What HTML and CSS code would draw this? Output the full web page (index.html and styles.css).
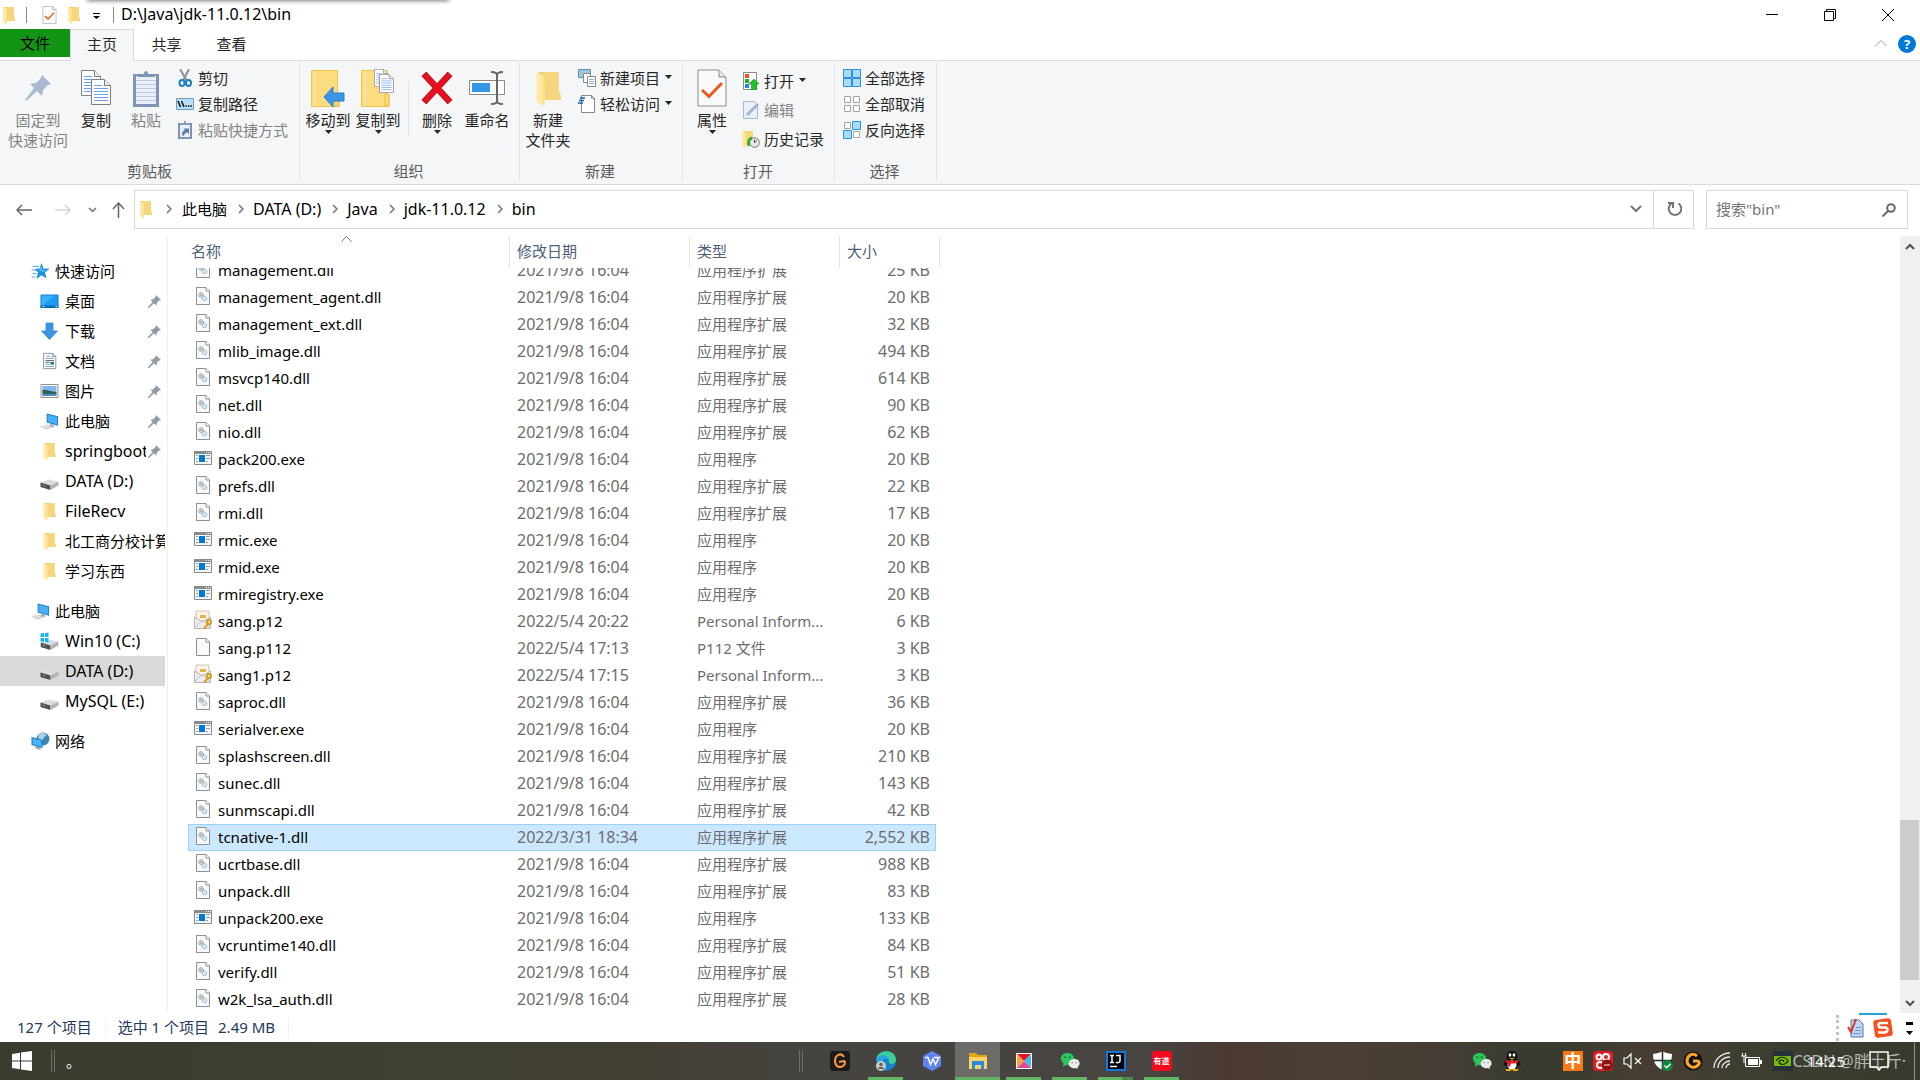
FILE: index.html
```html
<!DOCTYPE html>
<html lang="zh-CN">
<head>
    <meta charset="UTF-8">
    <meta name="viewport" content="width=device-width, initial-scale=1.0">
    <title>bin</title>
    <link rel="stylesheet" href="styles.css">
</head>
<body>
    <!-- shared icons -->
    <svg class="sprite" aria-hidden="true">
        <symbol id="folder" viewBox="0 0 12 18">
            <path d="M1 1h10v10l1 1v3H5z" fill="#f0cd6c"/>
            <path d="M4 1h7v11l1 1v2H4z" fill="#f6d67c"/>
            <path d="M0 1l4 2v15l-4-2z" fill="#ffe9a6"/>
            <path d="M3 2l1 1v15l-1-.5z" fill="#ffe08a"/>
        </symbol>
        <symbol id="dll" viewBox="0 0 18 20">
            <path d="M2.500 1.500h9.500l3.500 3.500v13.500H2.500z" fill="#f9f9f9" stroke="#8c8f91"/>
            <path d="M12 1.500v3.500h3.500" fill="#fff" stroke="#8c8f91"/>
            <circle cx="7" cy="9" r="2.300" fill="#dde1e4" stroke="#7d858b" stroke-dasharray="1 .5"/>
            <circle cx="7" cy="9" r=".8" fill="#7d858b"/>
            <circle cx="10.500" cy="12.500" r="2.200" fill="#d5eaf5" stroke="#77a3bd" stroke-dasharray="1 .5"/>
        </symbol>
        <symbol id="exe" viewBox="0 0 18 20">
            <path d="M.5 3.500h17v13H.5z" fill="#f7f7f7" stroke="#858a8e"/>
            <path d="M0 3h18v3H0z" fill="#858a8e"/>
            <path d="M12 4h1v1h-1zM14 4h1v1h-1zM16 4h1v1h-1z" fill="#fff"/>
            <path d="M5 7h6v7H5z" fill="#0078d7"/>
            <path d="M2 7.500h2M2 10.500h2M2 13.500h2M12 7.500h4M12 10.500h4M12 13.500h2" stroke="#9a9a9a"/>
        </symbol>
        <symbol id="p12" viewBox="0 0 18 20">
            <path d="M2 1h13v10H2z" fill="#faf5e6" stroke="#cfc6ab"/>
            <path d="M6 5h6v3H6z" fill="#e2b64c"/>
            <path d="M.5 7l8 5 8-5v11.500H.5z" fill="#ececec" stroke="#b5b5b5"/>
            <path d="M.5 18l6-6M16.500 18l-6-6" stroke="#c4c4c4"/>
            <circle cx="15" cy="12" r="2.200" fill="#fbd67a" stroke="#d08c17" stroke-width="1.500"/>
            <path d="M14 14l-4 4.500" stroke="#e0992a" stroke-width="2"/>
        </symbol>
        <symbol id="blank" viewBox="0 0 18 20">
            <path d="M2.500 1.500h9.500l3.500 3.500v13.500H2.500z" fill="#fafafa" stroke="#8c8f91"/>
            <path d="M12 1.500v3.500h3.500" fill="#fff" stroke="#8c8f91"/>
        </symbol>
        <symbol id="star" viewBox="0 0 18 18">
            <path d="M10 1l2 5.500 6 .3-4.500 3.700 1.500 6-5-3.200L5 17l1.500-6.500L3 7l5-.5z" fill="#1e90e0"/>
            <path d="M10 4l1.200 3.800 4 .2-3 2.200-5-2z" fill="#58b7f5"/>
            <path d="M1 4.500h6M0 8h5M1 11.500h4M0 15h4" stroke="#54aeea"/>
        </symbol>
        <symbol id="desktop" viewBox="0 0 18 18">
            <path d="M.5 3h17v12.500H.5z" fill="#1d9bf2" stroke="#0f78c8"/>
            <path d="M1 3.500h13L3 13H1z" fill="#3db0fa"/>
            <path d="M0 13.500h18V16H0z" fill="#0a6ab8"/>
            <path d="M2 14.500h2M15 14.500h2" stroke="#cfeaff"/>
        </symbol>
        <symbol id="download" viewBox="0 0 18 18">
            <path d="M5.500 1h7v8H17l-8 8.500L1 9h4.500z" fill="#3c95e2" stroke="#2b7fca" stroke-width=".7"/>
        </symbol>
        <symbol id="doc" viewBox="0 0 18 20">
            <path d="M2.500 1.500h10l3.500 3.500v13.500H2.500z" fill="#fff" stroke="#8a8a8a"/>
            <path d="M12.500 1.500v3.500H16" fill="none" stroke="#8a8a8a"/>
            <path d="M5 4.500h5M4.500 7h9.500M4.500 13.500H9M4.500 16H14" stroke="#63a6c9"/>
            <path d="M4.500 9.500h9.500M4.500 11.500H9" stroke="#555"/>
            <path d="M10 11h4v3h-4z" fill="#2f6d99"/>
        </symbol>
        <symbol id="picture" viewBox="0 0 18 18">
            <path d="M.5 2.500h17v13H.5z" fill="#fff" stroke="#8f9396"/>
            <path d="M2 4h14v10H2z" fill="#7db8ea"/>
            <path d="M2 8c3-1 8 2 14 2v2H2z" fill="#2f6355"/>
            <path d="M2 12h14v2H2z" fill="#4d8fc4"/>
        </symbol>
        <symbol id="pc" viewBox="0 0 20 18">
            <path d="M7 1l12 3v10L7 10.500z" fill="#1f7fc4"/>
            <path d="M8 2.300l10 2.500v7.800L8 9.800z" fill="#46b1f5"/>
            <path d="M11 12l4 1.500-1 2-4-1z" fill="#9aa7b1"/>
            <path d="M0 14.500l8-2 6 3-8 2.500z" fill="#c8ced3"/>
            <path d="M2 14.800l6-1.300M4 16l6-1.300" stroke="#fff" stroke-width=".6"/>
        </symbol>
        <symbol id="drive" viewBox="0 0 18 18">
            <path d="M0 10.500l8-3 10 2-8 4z" fill="#dcdcdc"/>
            <path d="M0 10.500l10 3v4.500l-10-3z" fill="#4e4e4e"/>
            <path d="M10 13.500l8-4v4l-8 4.500z" fill="#b3b3b3"/>
            <path d="M2 13l3 1" stroke="#8f9c8c"/>
        </symbol>
        <symbol id="windrive" viewBox="0 0 18 18">
            <use href="#drive"/>
            <path d="M0 1h8v9H0z" fill="#fff"/>
            <path d="M0 1.500l3.500-.5v4H0zM4.500 1L8 .5V5H4.500zM0 6h3.500v4L0 9.500zM4.500 6H8v4.500L4.500 10z" fill="#13b6ee"/>
        </symbol>
        <symbol id="network" viewBox="0 0 18 18">
            <circle cx="11.500" cy="7" r="6.500" fill="#3c87b5"/>
            <path d="M7 3c3-3 7-2 8 0l-3 3-2 4-3-3z" fill="#a5d3ea"/>
            <path d="M0 5l11 3v8L0 13z" fill="#1873b8"/>
            <path d="M1 6.300l9 2.500v6L1 12.200z" fill="#4ab6f7"/>
            <path d="M4 15l5 2" stroke="#93a6b4" stroke-width="2"/>
        </symbol>
        <symbol id="pin" viewBox="0 0 14 14">
            <path d="M8.500 0L14 5.500l-2 .3-2.500 2.500-.3 3.200-2.700-2.700L1 14H0v-1l5-5.500L2.500 5l3-.5L8.200 2z" fill="#8e9aa5"/>
        </symbol>
        <symbol id="check" viewBox="0 0 30 38">
            <path d="M1 1h21l7 7v29H1z" fill="#fafafa" stroke="#8a8a8a"/>
            <path d="M22 1v7h7" fill="#e6e6e6" stroke="#8a8a8a"/>
            <path d="M5 21l7 6.500L25 14" fill="none" stroke="#e8591b" stroke-width="3"/>
        </symbol>
        <symbol id="page" viewBox="0 0 20 26">
            <path d="M.5.5h13l6 6v19H.5z" fill="#fff" stroke="#7f7f7f"/>
            <path d="M13.500.5v6h6" fill="#eee" stroke="#7f7f7f"/>
            <path d="M3 6.500h8M3 9.500h14M3 12.500h14M3 15.500h14M3 18.500h14M3 21.500h14" stroke="#6f9ff0"/>
        </symbol>
        <symbol id="bigfolder" viewBox="0 0 29 37">
            <path d="M.5.5h26V26l1.500 2v8.500H.5z" fill="#fcdc80" stroke="#efc54a"/>
            <path d="M4 1v35" stroke="#fbe7ab" stroke-width="1.500"/>
            <path d="M24 36V25c0-2 4-2 4 0v11z" fill="#fbd873" stroke="#e8bb42"/>
        </symbol>
        <symbol id="down" viewBox="0 0 7 4">
            <path d="M0 0h7L3.500 4z" fill="currentColor"/>
        </symbol>
        <symbol id="chevron" viewBox="0 0 6 10">
            <path d="M1 1l4 4-4 4" fill="none" stroke="#737373" stroke-width="1.500"/>
        </symbol>
        <symbol id="wechat" viewBox="0 0 20 18">
            <path d="M3 15l.5-3.500C-2 6 2 1 7.500 1c5 0 8 4 6.500 8s-5 5-8 4z" fill="#2dc35f"/>
            <path d="M18 17l-.5-2c4-3 2-8-3-8s-8 5-4 8c2 1.500 4 1.500 5.500 1z" fill="#ececec"/>
            <path d="M4.500 4.500h1.500v1.500H4.500zM9 4.500h1.500v1.500H9z" fill="#14602c"/>
            <path d="M11.500 10h1.200v1.200h-1.200zM15.500 10h1.200v1.200h-1.200z" fill="#777"/>
        </symbol>
    </svg>

    <div class="window">
        <header class="titlebar">
            <div class="back-shadow"></div>
            <svg class="ti-folder"><use href="#folder"/></svg>
            <span class="bar"></span>
            <button class="qa" aria-label="属性"><svg class="ti-check"><use href="#check"/></svg></button>
            <button class="qa" aria-label="新建文件夹"><svg class="ti-folder"><use href="#folder"/></svg></button>
            <button class="qa qa-more" aria-label="自定义快速访问工具栏"><svg width="7" height="6"><path d="M0 0h7v1H0zM0 3h7L3.500 6z"/></svg></button>
            <span class="bar bar-title"></span>
            <span class="title">D:\Java\jdk-11.0.12\bin</span>
            <div class="win-buttons">
                <button aria-label="最小化"><svg width="12" height="12"><path d="M0 5.500h12" stroke="#000"/></svg></button>
                <button aria-label="还原"><svg width="12" height="12" fill="none" stroke="#000"><path d="M.5 2.500h9v9h-9z"/><path d="M2.500 2.500v-2h9v9h-2"/></svg></button>
                <button aria-label="关闭"><svg width="12" height="12"><path d="M0 0l12 12M12 0L0 12" stroke="#000"/></svg></button>
            </div>
        </header>

        <nav class="tabs">
            <button class="tab tab-file">文件</button>
            <button class="tab active">主页</button>
            <button class="tab">共享</button>
            <button class="tab">查看</button>
            <div class="tabs-right">
                <button aria-label="最小化功能区"><svg width="12" height="7"><path d="M0 6.500l6-6 6 6" fill="none" stroke="#9a9a9a"/></svg></button>
                <button class="help" aria-label="帮助">?</button>
            </div>
        </nav>

        <section class="ribbon">
            <div class="group g-clip">
                <div class="tools">
                    <button class="big disabled w-66">
                        <span class="pic"><svg width="26" height="26" viewBox="0 0 26 26"><path d="M17 0l9 9-3 1-5 5-1 6-5-5L1 26l-1-1 9-12-4-4 6-1 5-5z" fill="#a9b9cf"/></svg></span>
                        固定到<br>快速访问
                    </button>
                    <button class="big w-46">
                        <span class="pic"><svg width="30" height="36"><use href="#page" width="20" height="26"/><use href="#page" x="10" y="9" width="20" height="26"/></svg></span>
                        复制
                    </button>
                    <button class="big disabled w-50">
                        <span class="pic"><svg width="26" height="37"><path d="M0 4h26v33H0z" fill="#7f93b7"/><path d="M3 6h20v28H3z" fill="#eaf1fb"/><path d="M3 10.500h20M3 14.500h20M3 18.500h20M3 22.500h20M3 26.500h20M3 30.500h20" stroke="#bccbe2"/><path d="M4 7l3-3h4c0-4 4-4 4 0h4l3 3z" fill="#7f93b7"/></svg></span>
                        粘贴
                    </button>
                    <div class="small-list">
                        <button class="small"><svg width="18" height="18"><path d="M4 0l7 12M13 0L7 12" stroke="#8a9299" stroke-width="2"/><ellipse cx="6" cy="14" rx="2.500" ry="3" fill="none" stroke="#1b7fc2" stroke-width="2"/><ellipse cx="12.500" cy="14" rx="2.500" ry="3" fill="none" stroke="#1b7fc2" stroke-width="2"/></svg>剪切</button>
                        <button class="small"><svg width="18" height="18"><path d="M.5 3.500h17v11H.5z" fill="#b9e0fa" stroke="#6f9ec0"/><path d="M2 6l2.500 6M5.500 6L8 12" stroke="#111" stroke-width="1.500"/><path d="M9.500 11h1.500M12 11h1.500M14.500 11H16" stroke="#111" stroke-width="1.500"/></svg>复制路径</button>
                        <button class="small disabled"><svg width="18" height="18"><path d="M2 2h14v16H2z" fill="#7f93b7"/><path d="M4 4h10v12H4z" fill="#e8effa"/><path d="M5 4V2h3V0h2v2h3v2z" fill="#8b9dbd"/><path d="M6 14c0-3 1-4 3-5L7.500 7.500H13V13l-1.500-1.500C9 12 8 13 8 15z" fill="#5f7aa8"/></svg>粘贴快捷方式</button>
                    </div>
                </div>
                <div class="group-name">剪贴板</div>
            </div>

            <div class="group g-org">
                <div class="tools">
                    <button class="big w-50">
                        <span class="pic"><svg width="34" height="38"><use href="#bigfolder" y="1" width="29" height="37"/><path d="M13 28l9-10v6h11v8H22v6z" fill="#3a97e8" stroke="#2b7fca"/></svg></span>
                        移动到
                        <svg class="arrow"><use href="#down"/></svg>
                    </button>
                    <button class="big w-50">
                        <span class="pic"><svg width="34" height="38"><use href="#bigfolder" y="1" width="29" height="37"/><use href="#page" x="13" width="14" height="18"/><use href="#page" x="18" y="5" width="15" height="19"/></svg></span>
                        复制到
                        <svg class="arrow"><use href="#down"/></svg>
                    </button>
                    <span class="tool-sep"></span>
                    <button class="big w-50">
                        <span class="pic"><svg width="32" height="34"><path d="M3 3l26 28M29 3L3 31" stroke="#a8121a" stroke-width="6.500"/><path d="M3 3l26 28M29 3L3 31" stroke="#e8101c" stroke-width="5"/></svg></span>
                        删除
                        <svg class="arrow"><use href="#down"/></svg>
                    </button>
                    <button class="big w-50">
                        <span class="pic"><svg width="36" height="34"><path d="M.5 9.500h35v14H.5z" fill="#fff" stroke="#8a8a8a"/><path d="M3 12h18v9H3z" fill="#3295e8"/><path d="M22 1c4 0 6 1 6 3v26c0 2-2 3-6 3M34 1c-4 0-6 1-6 3v26c0 2 2 3 6 3" fill="none" stroke="#666" stroke-width="2"/></svg></span>
                        重命名
                    </button>
                </div>
                <div class="group-name">组织</div>
            </div>

            <div class="group g-new">
                <div class="tools">
                    <button class="big w-50">
                        <span class="pic"><svg width="25" height="36"><use href="#folder" width="25" height="36"/></svg></span>
                        新建<br>文件夹
                    </button>
                    <div class="small-list">
                        <button class="small"><svg width="18" height="18"><path d="M.5.500h12v8H.5z" fill="#9cc7de" stroke="#5a91ad"/><path d="M5.500 4.500h7v9h-7z" fill="#fff" stroke="#8a8a8a"/><path d="M9.500 7.500h8v10h-8z" fill="#fff" stroke="#8a8a8a"/><path d="M11 10.500h5M11 12.500h5M11 14.500h5" stroke="#8db4ee"/></svg>新建项目<svg class="arrow"><use href="#down"/></svg></button>
                        <button class="small"><svg width="18" height="18"><path d="M3.500.500h10l3 3v14h-13z" fill="#fff" stroke="#8a8a8a"/><path d="M13.500.5v3h3" fill="none" stroke="#8a8a8a"/><path d="M2 3h5M1 5.500h5M0 8h5" stroke="#1560a8" stroke-width="1.500"/></svg>轻松访问<svg class="arrow"><use href="#down"/></svg></button>
                    </div>
                </div>
                <div class="group-name">新建</div>
            </div>

            <div class="group g-open">
                <div class="tools">
                    <button class="big w-50">
                        <span class="pic"><svg width="30" height="38"><use href="#check"/></svg></span>
                        属性
                        <svg class="arrow"><use href="#down"/></svg>
                    </button>
                    <div class="small-list loose">
                        <button class="small"><svg width="18" height="18"><path d="M1.500.5h13v17h-13z" fill="#fff" stroke="#8a8a8a"/><path d="M3 2h4v4H3z" fill="#e8591b"/><path d="M3 7h4v4H3z" fill="#1fae2a"/><path d="M3 12h4v4H3z" fill="#2a86dc"/><path d="M12 7l5 5h-2.500v6h-5v-6H7z" fill="#22c02a" stroke="#158a1c" stroke-width=".6"/></svg>打开<svg class="arrow"><use href="#down"/></svg></button>
                        <button class="small disabled"><svg width="18" height="18"><path d="M1.500.5h11l3 3v14h-14z" fill="#e9f0fa" stroke="#a9b9d2"/><path d="M5 14L16 3" stroke="#a3b5d2" stroke-width="3"/></svg>编辑</button>
                        <button class="small"><svg width="18" height="18"><use href="#folder" width="12" height="18"/><circle cx="12.500" cy="12.500" r="4.800" fill="#e8e8e8" stroke="#777"/><path d="M12.500 9.500v3l2-1.500" fill="none" stroke="#444"/><path d="M10 8c-4 1-4 5-3 8" fill="none" stroke="#23b02c" stroke-width="2.500"/></svg>历史记录</button>
                    </div>
                </div>
                <div class="group-name">打开</div>
            </div>

            <div class="group g-select">
                <div class="tools">
                    <div class="small-list">
                        <button class="small"><svg width="18" height="18" fill="#a9dbfb" stroke="#2b8fdf"><path d="M.5.500h8v8h-8zM9.500.500h8v8h-8zM.5 9.500h8v8h-8zM9.500 9.500h8v8h-8z"/></svg>全部选择</button>
                        <button class="small"><svg width="18" height="18" fill="#fff" stroke="#a3a3a3"><path d="M1.500 1.500h6v6h-6zM10.500 1.500h6v6h-6zM1.500 10.500h6v6h-6zM10.500 10.500h6v6h-6z"/></svg>全部取消</button>
                        <button class="small"><svg width="18" height="18"><path d="M1.500 1.500h6v6h-6zM10.500 10.500h6v6h-6z" fill="#fff" stroke="#a3a3a3"/><path d="M9.500.500h8v8h-8zM.5 9.500h8v8h-8z" fill="#a9dbfb" stroke="#2b8fdf"/></svg>反向选择</button>
                    </div>
                </div>
                <div class="group-name">选择</div>
            </div>
        </section>

        <div class="navbar">
            <div class="nav-buttons">
                <button aria-label="后退"><svg width="16" height="12" fill="none" stroke="#666" stroke-width="1.500"><path d="M1 6h15M6 1L1 6l5 5"/></svg></button>
                <button aria-label="前进"><svg width="16" height="12" fill="none" stroke="#d5d5d5" stroke-width="1.500"><path d="M0 6h15M10 1l5 5-5 5"/></svg></button>
                <button aria-label="最近浏览的位置" class="recent"><svg width="9" height="6" fill="none" stroke="#737373" stroke-width="1.500"><path d="M1 1l3.500 3.500L8 1"/></svg></button>
                <button aria-label="上移" class="up"><svg width="13" height="16" fill="none" stroke="#666" stroke-width="1.500"><path d="M6.500 1v15M1 7l5.500-6L12 7"/></svg></button>
            </div>
            <div class="address">
                <svg class="ti-folder"><use href="#folder"/></svg>
                <svg class="crumb-sep"><use href="#chevron"/></svg>
                <a href="#">此电脑</a>
                <svg class="crumb-sep"><use href="#chevron"/></svg>
                <a href="#" class="latin">DATA (D:)</a>
                <svg class="crumb-sep"><use href="#chevron"/></svg>
                <a href="#" class="latin">Java</a>
                <svg class="crumb-sep"><use href="#chevron"/></svg>
                <a href="#" class="latin">jdk-11.0.12</a>
                <svg class="crumb-sep"><use href="#chevron"/></svg>
                <a href="#" class="latin">bin</a>
                <button class="history" aria-label="以前的位置"><svg width="12" height="8" fill="none" stroke="#737373" stroke-width="2"><path d="M1 1l5 5 5-5"/></svg></button>
                <button class="refresh" aria-label="刷新"><svg width="16" height="16" fill="none" stroke="#737373" stroke-width="2"><path d="M12.500 2.500A6.300 6.300 0 1 1 5.500 2.500"/><path d="M2 2h5v5"/></svg></button>
            </div>
            <div class="search">
                <input type="text" placeholder='搜索"bin"' aria-label="搜索">
                <svg width="14" height="14" fill="none" stroke="#6b6b6b" stroke-width="2"><circle cx="9" cy="5" r="3.800"/><path d="M6 8l-5.500 5.500"/></svg>
            </div>
        </div>

        <main class="content">
            <aside class="sidebar">
                <a href="#" class="side-item root"><svg><use href="#star"/></svg>快速访问</a>
                <a href="#" class="side-item"><svg><use href="#desktop"/></svg><span>桌面</span><svg class="pin"><use href="#pin"/></svg></a>
                <a href="#" class="side-item"><svg><use href="#download"/></svg><span>下载</span><svg class="pin"><use href="#pin"/></svg></a>
                <a href="#" class="side-item"><svg><use href="#doc"/></svg><span>文档</span><svg class="pin"><use href="#pin"/></svg></a>
                <a href="#" class="side-item"><svg><use href="#picture"/></svg><span>图片</span><svg class="pin"><use href="#pin"/></svg></a>
                <a href="#" class="side-item"><svg><use href="#pc"/></svg><span>此电脑</span><svg class="pin"><use href="#pin"/></svg></a>
                <a href="#" class="side-item"><svg><use href="#folder"/></svg><span class="latin">springboot</span><svg class="pin"><use href="#pin"/></svg></a>
                <a href="#" class="side-item"><svg><use href="#drive"/></svg><span class="latin">DATA (D:)</span></a>
                <a href="#" class="side-item"><svg><use href="#folder"/></svg><span class="latin">FileRecv</span></a>
                <a href="#" class="side-item"><svg><use href="#folder"/></svg><span>北工商分校计算</span></a>
                <a href="#" class="side-item"><svg><use href="#folder"/></svg><span>学习东西</span></a>
                <a href="#" class="side-item root spaced"><svg><use href="#pc"/></svg>此电脑</a>
                <a href="#" class="side-item"><svg><use href="#windrive"/></svg><span class="latin">Win10 (C:)</span></a>
                <a href="#" class="side-item current"><svg><use href="#drive"/></svg><span class="latin">DATA (D:)</span></a>
                <a href="#" class="side-item"><svg><use href="#drive"/></svg><span class="latin">MySQL (E:)</span></a>
                <a href="#" class="side-item root spaced"><svg><use href="#network"/></svg>网络</a>
            </aside>

            <div class="files" id="files">
                <table>
                    <thead>
                        <tr>
                            <th class="col-name">名称<svg class="sort" width="11" height="6"><path d="M.5 5.500l5-5 5 5" fill="none" stroke="#777"/></svg></th>
                            <th class="col-date">修改日期</th>
                            <th class="col-type">类型</th>
                            <th class="col-size">大小</th>
                        </tr>
                    </thead>
                    <tbody id="rows"></tbody>
                </table>
            </div>

            <div class="scrollbar">
                <button aria-label="向上滚动"><svg width="10" height="7" fill="none" stroke="#505050" stroke-width="2"><path d="M1 6l4-4 4 4"/></svg></button>
                <div class="thumb"></div>
                <button aria-label="向下滚动"><svg width="10" height="7" fill="none" stroke="#505050" stroke-width="2"><path d="M1 1l4 4 4-4"/></svg></button>
            </div>
        </main>

        <footer class="status">
            <span class="count">127 个项目</span>
            <span class="picked">选中 1 个项目</span>
            <span class="total">2.49 MB</span>
            <div class="ime">
                <span class="grip"></span>
                <svg width="18" height="20"><path d="M4 2h8l4 4v13H4z" fill="#bcd8f5" stroke="#5577a5"/><path d="M9 9.500h5M8 12.500h6M6 15.500h8" stroke="#6b98d0"/><path d="M1 9l3 5L9 1" fill="none" stroke="#e0341d" stroke-width="2"/></svg>
                <svg width="20" height="20"><rect x="1" y="1" width="18" height="18" rx="3" fill="#f4511e" transform="rotate(-8 10 10)"/><path d="M15 5H8c-4 0-3 4.500 0 4.500h4c4 0 3 5-1 5H5" fill="none" stroke="#fff" stroke-width="2.500"/></svg>
                <svg width="7" height="14"><path d="M0 1h7v3H0zM0 10h7l-3.500 4z"/></svg>
            </div>
        </footer>
    </div>

    <footer class="taskbar">
        <button class="start" aria-label="开始"><svg width="20" height="20"><path d="M0 3l8-1.200V9.500H0zM9 1.600L20 0v9.500H9zM0 10.500h8v7.700L0 17zM9 10.500h11V20L9 18.400z" fill="#fff"/></svg></button>
        <span class="bars"></span>
        <span class="dot">。</span>
        <div class="apps">
            <span class="bars"></span>
            <button class="app" aria-label="G"><svg width="20" height="20"><rect width="20" height="20" rx="3" fill="#1b1b1b"/><path d="M14 6c-3-5-9-2-9 4s5 7 8 5 2-5 1-5L9 11" fill="none" stroke="#ff9a3d" stroke-width="2"/></svg></button>
            <button class="app open" aria-label="Edge"><svg width="20" height="20"><circle cx="10" cy="10" r="10" fill="#1583cf"/><path d="M0 9C2-3 20-2 20 9c0 4-5 5-7 3 1-6-8-9-13-3z" fill="#3ccf9a"/><path d="M1 7C5 2 12 4 13 9c-4-3-8 0-7 6-4-1-6-5-5-8z" fill="#2ba5e0"/><circle cx="5" cy="15" r="5" fill="#c9c9c9"/><circle cx="5" cy="13.500" r="1.800" fill="#666"/><path d="M2 18c0-3 6-3 6 0z" fill="#666"/></svg></button>
            <button class="app" aria-label="WPS"><svg width="20" height="20"><path d="M10 0l9 5v10l-9 5-9-5V5z" fill="#5f84f0"/><path d="M3 6.500h3l2.500 7L11 8l2.500 5.500L17 6.500h-5" fill="none" stroke="#fff" stroke-width="1.500"/></svg></button>
            <button class="app open focus" aria-label="文件资源管理器"><svg width="20" height="20"><path d="M1 2h7l2 2h9v14H1z" fill="#e5a413"/><path d="M1 6h18v12H1z" fill="#fcd463"/><path d="M4 18v-8h12v8h-3v-4H7v4z" fill="#2b8be0"/></svg></button>
            <button class="app open" aria-label="视频"><svg width="20" height="20"><path d="M2 2h16v16H2z" fill="#fff"/><path d="M3 3h14l-7 7z" fill="#e81123"/><path d="M3 3l7 7-7 7z" fill="#f7a13c"/><path d="M17 3v14l-7-7z" fill="#45b9e8"/><path d="M3 17l7-7 7 7z" fill="#e0489a"/></svg></button>
            <button class="app open" aria-label="微信"><svg width="20" height="18"><use href="#wechat"/></svg></button>
            <button class="app open multi" aria-label="IntelliJ IDEA"><svg width="20" height="20"><path d="M1 1h18v18H1z" fill="#000" stroke="#1276e3" stroke-width="2"/><path d="M4 4.500h4M6 4.500v7M4 11.500h4M10 4.500h4v5.500c0 2-3 2-4 1M4 15.500h7" fill="none" stroke="#fff" stroke-width="1.500"/></svg></button>
            <button class="app open youdao"><span>有道</span></button>
        </div>
        <div class="tray">
            <svg class="t-wechat" width="20" height="18"><use href="#wechat"/></svg>
            <svg class="t-qq" width="20" height="20"><path d="M10 0c5 0 6 4 5 8 3 3 4 6 3 7l-2-1-1 4H5l-1-4-2 1c-1-1 0-4 3-7C4 4 5 0 10 0z" fill="#111"/><ellipse cx="10" cy="14" rx="4.500" ry="4.500" fill="#fff"/><ellipse cx="8" cy="4" rx="1.400" ry="1.800" fill="#fff"/><ellipse cx="12" cy="4" rx="1.400" ry="1.800" fill="#fff"/><path d="M7 7h6l-3 1.500z" fill="#f5b100"/><path d="M4 8.500c4 2 8 2 12 0v3c-2 1-5 1-7 1l-1 3H6v-3l-2-1z" fill="#e02020"/><path d="M4 18h5v2H4zM11 18h5v2h-5z" fill="#f5a800"/></svg>
            <span class="t-ime">中</span>
            <svg width="20" height="20"><rect width="20" height="20" rx="4" fill="#e01b24"/><g fill="none" stroke="#fff" stroke-width="2"><circle cx="6" cy="6" r="2.500"/><circle cx="13" cy="6" r="3"/><circle cx="7" cy="14" r="3"/></g><circle cx="14" cy="14" r="5.500" fill="#8d1015"/><path d="M11 14h6" stroke="#e8a0a0" stroke-width="1.500"/></svg>
            <svg width="20" height="20" fill="none" stroke="#fff" stroke-width="1.200"><path d="M1 7h3l4-4v14l-4-4H1zM12 7l6 6M18 7l-6 6"/></svg>
            <svg width="20" height="20"><path d="M9.500 0C7 2 4 2.500 0 3c0 8 3 13 9.500 16C16 16 19 11 19 3 15 2.500 12 2 9.500 0z" fill="#fff"/><path d="M9.500 0v19M0 9.500h19" stroke="#20241d" stroke-width="1.500"/><circle cx="14.500" cy="14.500" r="5.500" fill="#12853f"/><path d="M11.500 14.500l2.200 2.200 3.800-4" fill="none" stroke="#fff" stroke-width="1.400"/></svg>
            <svg class="t-c" width="20" height="20"><circle cx="10" cy="10" r="9.500" fill="#15130f"/><path d="M14 5C9 1 4 5 4 10s6 8 10 5 2-5 0-5h-4" fill="none" stroke="#ffa52b" stroke-width="3"/></svg>
            <svg class="t-wifi" width="20" height="20" fill="none" stroke="#e8e8e8" stroke-width="1.300"><path d="M1 17C1 9 8 2 17 2M5 17c0-6 5-11 12-11M9 17c0-4 4-7 8-7M13 17c0-2 2-4 4-4"/></svg>
            <svg class="t-bat" width="22" height="20"><path d="M4.500 6.500h14v9h-14z" fill="none" stroke="#fff"/><path d="M7 8h10v6H7zM19 9h2v4h-2z" fill="#fff"/><path d="M0 5h6M1.500 2v3M4.500 2v3M3 5v7" stroke="#fff"/></svg>
            <svg class="t-nv" width="20" height="20"><path d="M0 0h20v20H0z" fill="#26303a"/><path d="M1 5h17v10H1z" fill="#76b900"/><path d="M3 10c3-5 9-5 12 0-3 5-8 4-9 1 1-3 5-2 5 0" fill="none" stroke="#1c2b10" stroke-width="1.200"/></svg>
            <span class="clock">14:25</span>
            <button class="notify" aria-label="通知"><svg width="20" height="20" fill="none" stroke="#fff" stroke-width="1.500"><path d="M1 1h18v15h-6.500L10 19l-2.500-3H1z"/></svg></button>
            <span class="peek"></span>
            <span class="watermark">CSDN @胖土斤·</span>
        </div>
    </footer>

    <script>
        const T = '2021/9/8 16:04';
        const files = [
            ['management.dll', T, 25],
            ['management_agent.dll', T, 20],
            ['management_ext.dll', T, 32],
            ['mlib_image.dll', T, 494],
            ['msvcp140.dll', T, 614],
            ['net.dll', T, 90],
            ['nio.dll', T, 62],
            ['pack200.exe', T, 20],
            ['prefs.dll', T, 22],
            ['rmi.dll', T, 17],
            ['rmic.exe', T, 20],
            ['rmid.exe', T, 20],
            ['rmiregistry.exe', T, 20],
            ['sang.p12', '2022/5/4 20:22', 6],
            ['sang.p112', '2022/5/4 17:13', 3],
            ['sang1.p12', '2022/5/4 17:15', 3],
            ['saproc.dll', T, 36],
            ['serialver.exe', T, 20],
            ['splashscreen.dll', T, 210],
            ['sunec.dll', T, 143],
            ['sunmscapi.dll', T, 42],
            ['tcnative-1.dll', '2022/3/31 18:34', 2552],
            ['ucrtbase.dll', T, 988],
            ['unpack.dll', T, 83],
            ['unpack200.exe', T, 133],
            ['vcruntime140.dll', T, 84],
            ['verify.dll', T, 51],
            ['w2k_lsa_auth.dll', T, 28]
        ];
        const types = {
            dll: ['dll', '应用程序扩展'],
            exe: ['exe', '应用程序'],
            p12: ['p12', 'Personal Inform...'],
            p112: ['blank', 'P112 文件']
        };

        document.getElementById('rows').innerHTML = files.map(([name, date, size]) => {
            const [icon, type] = types[name.split('.').pop()];
            return `
                <tr class="${name === 'tcnative-1.dll' ? 'selected' : ''}">
                    <td class="name"><div><svg><use href="#${icon}"/></svg>${name}</div></td>
                    <td class="latin">${date}</td>
                    <td>${type}</td>
                    <td class="size latin">${size.toLocaleString('en-US')} KB</td>
                </tr>
            `;
        }).join('');

        // open at the end of the list
        const list = document.getElementById('files');
        list.scrollTop = list.scrollHeight;
    </script>
</body>
</html>
```

FILE: styles.css
```css
* {
    box-sizing: border-box;
}

body {
    margin: 0;
    height: 100vh;
    display: flex;
    flex-direction: column;
    overflow: hidden;
    background: #fff;
    color: #000;
    font-family: 'Noto Sans', 'Noto Sans CJK SC', sans-serif;
    font-size: 15px;
    line-height: 20px;
}

button {
    border: none;
    background: none;
    padding: 0;
    margin: 0;
    font: inherit;
    color: inherit;
}

a {
    color: inherit;
    text-decoration: none;
}

svg {
    flex: none;
    display: block;
}

.sprite {
    position: absolute;
    width: 0;
    height: 0;
}

.latin {
    font-size: 16px;
}

.window {
    flex: 1;
    min-height: 0;
    display: flex;
    flex-direction: column;
}

/* title bar */
.titlebar {
    position: relative;
    height: 29px;
    display: flex;
    align-items: center;
    padding-left: 3px;
}

.back-shadow {
    position: absolute;
    top: -10px;
    left: 88px;
    width: 360px;
    height: 10px;
    box-shadow: 0 0 4px 1px rgba(0, 0, 0, 0.5);
}

.title {
    padding-bottom: 2px;
    font-size: 16px;
}

.ti-folder {
    width: 12px;
    height: 18px;
}

.ti-check {
    width: 15px;
    height: 18px;
}

.bar {
    width: 1px;
    height: 16px;
    margin: 0 15px 0 11px;
    background: #8a8a8a;
}

.qa {
    margin-right: 11px;
}

.qa-more {
    margin: 3px 0 0 2px;
}

.bar-title {
    margin: 0 7px 0 13px;
}

.win-buttons {
    margin-left: auto;
    padding-right: 3px;
    display: flex;
}

.win-buttons button {
    width: 58px;
    height: 28px;
    display: flex;
    justify-content: center;
    align-items: center;
}

/* tabs */
.tabs {
    height: 32px;
    display: flex;
    border-bottom: 1px solid #dadbdc;
}

.tab {
    width: 65px;
    height: 31px;
    padding-bottom: 2px;
    color: #262626;
}

.tab-file {
    width: 70px;
    height: 28px;
    padding: 0;
    background: #149414;
    color: #000;
}

.tab.active {
    width: 64px;
    height: 32px;
    padding-bottom: 3px;
    border: 1px solid #dadbdc;
    border-bottom: none;
    background: #f5f6f7;
}

.tabs-right {
    margin-left: auto;
    padding-right: 4px;
    padding-bottom: 2px;
    display: flex;
    align-items: center;
    gap: 11px;
}

.help {
    width: 18px;
    height: 18px;
    border-radius: 50%;
    background: #0078d7;
    color: #fff;
    font-size: 13px;
    line-height: 18px;
    font-weight: bold;
}

/* ribbon */
.ribbon {
    height: 124px;
    display: flex;
    background: #f5f6f7;
    border-bottom: 1px solid #dadbdc;
    color: #262626;
}

.group {
    display: flex;
    flex-direction: column;
    margin: 2px 0 3px;
    border-right: 1px solid #e1e2e3;
}

.g-clip {
    width: 300px;
    padding-left: 5px;
}

.g-org {
    width: 220px;
    padding-left: 3px;
}

.g-new {
    width: 163px;
    padding-left: 3px;
}

.g-open {
    width: 152px;
    padding-left: 4px;
}

.g-select {
    width: 102px;
    padding-left: 3px;
}

.tools {
    flex: 1;
    display: flex;
}

.group-name {
    height: 20px;
    padding-right: 5px;
    text-align: center;
    color: #5a5a5a;
}

.big {
    padding-top: 3px;
    margin-right: 2px;
    white-space: nowrap;
    text-align: center;
    align-self: flex-start;
}

.w-46 { width: 46px; }
.w-50 { width: 50px; margin-right: 0; }
.w-66 { width: 66px; }

.pic {
    height: 44px;
    display: flex;
    justify-content: center;
    align-items: center;
}

.arrow {
    width: 7px;
    height: 4px;
}

.big .arrow {
    margin: 0 auto;
}

.tool-sep {
    width: 1px;
    height: 55px;
    margin: 19px 3px 0 5px;
    background: #e1e2e3;
}

.small-list {
    padding: 3px 0 0 5px;
    display: flex;
    flex-direction: column;
    gap: 2px;
}

.small-list.loose {
    padding: 6px 0 0 5px;
    gap: 5px;
}

.small {
    height: 24px;
    display: flex;
    align-items: center;
    gap: 4px;
    white-space: nowrap;
}

.small .arrow {
    margin: 0 0 2px 1px;
}

.disabled {
    color: #838383;
}

/* address row */
.navbar {
    padding: 5px 12px 7px 0;
    display: flex;
}

.nav-buttons {
    width: 134px;
    padding-left: 16px;
    display: flex;
    align-items: center;
    gap: 23px;
}

.nav-buttons .recent {
    margin-left: -6px;
}

.nav-buttons .up {
    margin-left: -8px;
}

.address {
    flex: 1;
    height: 39px;
    margin-right: 12px;
    padding: 0 0 1px 5px;
    display: flex;
    align-items: center;
    border: 1px solid #d9d9d9;
}

.address a {
    padding-bottom: 1px;
}

.crumb-sep {
    width: 6px;
    height: 10px;
    margin: 0 9px 0 11px;
}

.address .ti-folder + .crumb-sep {
    margin: 0 10px 0 14px;
}

.history {
    margin-left: auto;
    margin-right: 11px;
}

.refresh {
    width: 40px;
    height: 37px;
    display: flex;
    justify-content: center;
    align-items: center;
    border-left: 1px solid #d9d9d9;
}

.search {
    width: 202px;
    height: 39px;
    padding: 0 11px 0 9px;
    display: flex;
    align-items: center;
    border: 1px solid #d9d9d9;
}

.search input {
    flex: 1;
    min-width: 0;
    padding: 0 0 2px;
    border: none;
    outline: none;
    font: inherit;
}

.search input::placeholder {
    color: #757575;
}

/* content */
.content {
    flex: 1;
    min-height: 0;
    display: flex;
}

.sidebar {
    width: 168px;
    padding: 20px 2px 0 0;
    border-right: 1px solid #f0f0f0;
}

.side-item {
    height: 30px;
    padding-left: 40px;
    display: flex;
    align-items: center;
    gap: 6px;
    white-space: nowrap;
}

.side-item svg {
    width: 19px;
    height: 18px;
}

.side-item span {
    flex: 1;
    min-width: 0;
    overflow: hidden;
}

.side-item .pin {
    width: 13px;
    height: 13px;
    margin: 0 4px 0 -4px;
}

.side-item.root {
    padding-left: 31px;
    gap: 5px;
}

.side-item.spaced {
    margin-top: 10px;
}

.side-item.current {
    background: #d9d9d9;
}

.files {
    flex: 1;
    padding-left: 20px;
    overflow: auto;
    scrollbar-width: none;
}

table {
    width: 752px;
    table-layout: fixed;
    border-collapse: separate;
    border-spacing: 0;
}

th {
    position: sticky;
    top: 0;
    z-index: 1;
    height: 32px;
    padding: 0 0 2px 7px;
    background: #fff;
    border-right: 1px solid #e5e5e5;
    color: #4c607a;
    font-weight: normal;
    text-align: left;
}

.col-name { width: 322px; padding-left: 3px; }
.col-date { width: 180px; }
.col-type { width: 150px; }
.col-size { width: 100px; }

.sort {
    position: absolute;
    top: 0;
    left: 153px;
}

td {
    height: 27px;
    padding: 0 0 2px 7px;
    color: #6d6d6d;
    white-space: nowrap;
}

td.name {
    padding-left: 6px;
    color: #000;
}

td.name div {
    display: flex;
    align-items: center;
    gap: 6px;
}

td.name svg {
    width: 18px;
    height: 20px;
    margin-bottom: 2px;
}

td.size {
    padding-right: 10px;
    text-align: right;
}

.selected td {
    background: #cce8ff;
    border: solid #99d1ff;
    border-width: 1px 0;
}

.selected td.name {
    padding-left: 5px;
    border-left-width: 1px;
}

/* the selection stops short of the last column's edge */
.selected td.size {
    position: relative;
    isolation: isolate;
    border-color: transparent;
    background: none;
}

.selected td.size::before {
    content: '';
    position: absolute;
    inset: -1px 4px -1px 0;
    z-index: -1;
    background: #cce8ff;
    border: solid #99d1ff;
    border-width: 1px 1px 1px 0;
}

.scrollbar {
    width: 20px;
    display: flex;
    flex-direction: column;
    background: #f0f0f0;
}

.scrollbar button {
    height: 20px;
    display: flex;
    justify-content: center;
    align-items: center;
}

.thumb {
    height: 160px;
    margin: auto 1px 13px 0;
    background: #cdcdcd;
}

/* status bar */
.status {
    height: 29px;
    padding-left: 17px;
    display: flex;
    align-items: center;
    color: #1e395b;
}

.count,
.picked,
.total {
    padding-bottom: 2px;
}

.count {
    padding-right: 13px;
    margin-right: 12px;
    border-right: 1px solid #f2f2f2;
}

.picked {
    margin-right: 9px;
}

.total {
    padding-right: 13px;
    border-right: 1px solid #f2f2f2;
}

.ime {
    position: relative;
    margin-left: auto;
    padding-right: 7px;
    display: flex;
    align-items: center;
    gap: 8px;
}

.ime::before {
    content: '';
    position: absolute;
    top: -2px;
    right: 33px;
    width: 28px;
    height: 2px;
    background: #2a9fd6;
}

.grip {
    height: 26px;
    border-left: 3px dotted #c4c4c4;
}

.ime svg:last-child {
    margin-left: 5px;
}

/* taskbar */
.taskbar {
    position: relative;
    height: 38px;
    display: flex;
    align-items: center;
    background: linear-gradient(90deg, #3a3c2f 0%, #424034 32%, #464441 45%, #474441 60%, #4b3832 64%, #4a3f35 68%, #463e36 75%, #373b30 80%, #473d33 86%, #3c3e31 92%, #373a2e 100%);
    color: #fff;
}

.start {
    margin-left: 12px;
}

.bars {
    width: 4px;
    height: 22px;
    margin: 0 11px 0 19px;
    border: solid #6d6e65;
    border-width: 0 1px;
}

.apps {
    position: absolute;
    left: 780px;
    height: 38px;
    display: flex;
    align-items: center;
    gap: 1px;
}

.apps .bars {
    margin-right: 13px;
}

.app {
    position: relative;
    width: 45px;
    height: 38px;
    display: flex;
    justify-content: center;
    align-items: center;
}

.app.open::after {
    content: '';
    position: absolute;
    bottom: 0;
    left: 5px;
    right: 5px;
    height: 3px;
    background: #62b562;
}

.app.focus {
    background: #6d6b69;
}

.app.focus::after {
    left: 0;
    right: 0;
}

.app.multi::after {
    background: linear-gradient(90deg, #62b562 24px, #4b8a4b 24px);
}

.youdao span {
    width: 20px;
    height: 20px;
    border-radius: 3px;
    background: #f5091d;
    font-size: 8px;
    font-weight: bold;
}

.tray {
    margin-left: auto;
    height: 38px;
    display: flex;
    align-items: center;
    gap: 10px;
}

.t-qq {
    margin-right: 31px;
}

.t-ime {
    width: 20px;
    height: 20px;
    background: #fb7914;
    font-size: 17px;
    font-weight: bold;
    text-align: center;
}

.t-bat {
    margin-left: -2px;
}

.clock {
    margin-left: 4px;
}

.notify {
    margin-left: 14px;
}

.peek {
    width: 1px;
    height: 38px;
    margin: 0 5px 0 15px;
    background: #8d8e86;
}

.watermark {
    position: absolute;
    right: 14px;
    color: rgba(255, 255, 255, 0.65);
    font-size: 16px;
}
```
